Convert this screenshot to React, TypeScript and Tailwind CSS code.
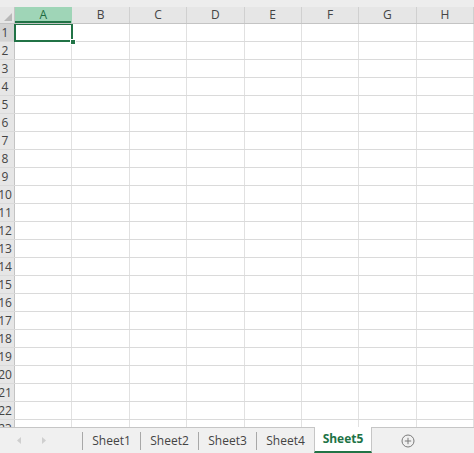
import React from 'react';

const COLUMNS = ['A', 'B', 'C', 'D', 'E', 'F', 'G', 'H'];
const ROWS = Array.from({ length: 23 }, (_, i) => i + 1);
const SHEETS = ['Sheet1', 'Sheet2', 'Sheet3', 'Sheet4', 'Sheet5'];
const ACTIVE = 'Sheet5';

export default function App() {
  return (
    <div
      className="w-[474px] h-[453px] overflow-hidden bg-white flex flex-col text-[#444]"
      style={{ fontFamily: '"Open Sans", "Noto Sans", sans-serif' }}
    >
      {/* 위쪽 여백 */}
      <div className="h-[7px] bg-[#ededed] shrink-0" />

      {/* 열 머리글 */}
      <div className="flex h-[17px] shrink-0 bg-[#e6e6e6] border-b border-[#c4c4c4]">
        <div className="w-[15px] shrink-0 border-r border-[#c4c4c4] flex items-end justify-end pr-[2px] pb-[2px]">
          <div className="w-0 h-0 border-l-[8px] border-l-transparent border-b-[8px] border-b-[#b8b8b8]" />
        </div>
        <div className="flex-1 grid grid-cols-8">
          {COLUMNS.map(c => (
            <div
              key={c}
              className={`flex items-center justify-center text-[12px] leading-none border-r ${
                c === 'A'
                  ? 'bg-[#9fd5b7] text-[#1e6b41] border-[#9fd5b7] shadow-[inset_0_-2px_0_#217346]'
                  : 'border-[#d0d0d0]'
              }`}
            >
              {c}
            </div>
          ))}
        </div>
      </div>

      {/* 셀 영역 */}
      <div className="flex-1 relative overflow-hidden">
        {ROWS.map(r => (
          <div key={r} className="flex h-[18px] border-b border-[#dadada]">
            <div
              className={`w-[15px] shrink-0 overflow-hidden border-r border-[#c4c4c4] ${
                r === 1 ? 'bg-[#d3d3d3]' : 'bg-[#e6e6e6]'
              }`}
            >
              <div className="w-[22px] -ml-[6px] text-center text-[12px] leading-[17px] text-[#444]">{r}</div>
            </div>
            <div className="flex-1 grid grid-cols-8">
              {COLUMNS.map(c => (
                <div key={c} className="border-r border-[#e1e1e1]" />
              ))}
            </div>
          </div>
        ))}

        {/* 선택된 셀 */}
        <div className="absolute left-[14px] top-[-1px] w-[59px] h-[19px] border-2 border-[#217346]" />
        <div className="absolute left-[70px] top-[15px] w-[6px] h-[6px] bg-[#217346] border border-white" />
      </div>

      {/* 시트 탭 */}
      <div className="h-[26px] shrink-0 flex bg-[#f0f0f0] border-t border-[#c6c6c6] text-[12px]">
        <div className="w-[82px] shrink-0 flex items-center pl-[17px] gap-[21px]">
          <svg width="4" height="7" viewBox="0 0 4 7">
            <path d="M4 0L0 3.5L4 7z" fill="#cfcfcf" />
          </svg>
          <svg width="4" height="7" viewBox="0 0 4 7">
            <path d="M0 0L4 3.5L0 7z" fill="#cfcfcf" />
          </svg>
        </div>
        {SHEETS.map(s =>
          s === ACTIVE ? (
            <div
              key={s}
              className="w-[58px] -mt-px flex items-center justify-center bg-white border-x border-[#c6c6c6] border-b-2 border-b-[#217346] font-bold text-[#217346]"
            >
              {s}
            </div>
          ) : (
            <div key={s} className="w-[58px] flex items-center">
              <div className="w-px h-[18px] bg-[#a8a8a8]" />
              <div className="flex-1 text-center text-[#444]">{s}</div>
            </div>
          )
        )}
        <div className="w-[72px] flex items-center justify-center">
          <svg width="14" height="14" viewBox="0 0 14 14" fill="none" stroke="#7a7a7a" strokeWidth="1">
            <circle cx="7" cy="7" r="6" />
            <path d="M7 3.8v6.4M3.8 7h6.4" />
          </svg>
        </div>
      </div>
    </div>
  );
}
